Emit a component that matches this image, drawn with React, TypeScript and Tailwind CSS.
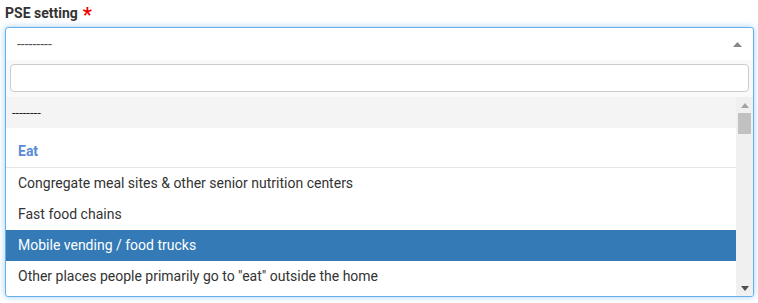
import React from "react";

const options = [
  "Congregate meal sites & other senior nutrition centers",
  "Fast food chains",
  "Mobile vending / food trucks",
  "Other places people primarily go to \"eat\" outside the home",
];

export default function App() {
  return (
    <div className="w-[758px] h-[303px] bg-white px-[5px] pt-[1px] font-['Roboto',sans-serif] text-[#333]">
      <label className="flex items-center h-[24px] text-[14px] font-bold text-[#333]">
        PSE setting <span className="ml-[5px] text-[20px] leading-none text-[#e00] mt-[4px]">*</span>
      </label>
      <div className="mt-[2px] w-[749px] border border-[#66afe9] rounded-[3px] shadow-[0_0_6px_rgba(102,175,233,0.6)] bg-white overflow-hidden">
        {/* selection */}
        <div className="flex items-center h-[32px] pl-[11px] pr-[11px] text-[14px] text-[#555]">
          <span className="flex-1">---------</span>
          <svg width="9" height="5" viewBox="0 0 9 5">
            <path d="M0 5 L4.5 0 L9 5 Z" fill="#888" />
          </svg>
        </div>
        {/* search */}
        <div className="bg-[#f9f9f9] px-[4px] pt-[4px] pb-[5px]">
          <input className="block w-full h-[28px] bg-white border border-[#ccc] rounded-[4px] outline-none" />
        </div>
        {/* results */}
        <div className="flex h-[199px]">
          <div className="flex-1 overflow-hidden text-[14px]">
            <div className="h-[31px] flex items-center pl-[6px] bg-[#f4f4f4] text-[13px] text-[#222]">--------</div>
            <div className="h-[40px] flex items-end pb-[5px] pl-[12px] font-bold text-[#5b8ad6] border-b border-[#e5e5e5]">Eat</div>
            {options.map((o, i) => (
              <div
                key={o}
                className={
                  i === 2
                    ? "h-[31px] flex items-center pl-[12px] bg-[#337ab7] text-white"
                    : "h-[31px] flex items-center pl-[12px] text-[#333]"
                }
              >
                {o}
              </div>
            ))}
          </div>
          {/* scrollbar */}
          <div className="w-[17px] bg-[#f0f0f0] flex flex-col items-center">
            <div className="h-[16px] flex items-center justify-center">
              <svg width="8" height="5" viewBox="0 0 8 5">
                <path d="M0 5 L4 0 L8 5 Z" fill="#a3a3a3" />
              </svg>
            </div>
            <div className="w-[13px] h-[21px] bg-[#c1c1c1]" />
            <div className="flex-1" />
            <div className="h-[16px] flex items-center justify-center">
              <svg width="8" height="5" viewBox="0 0 8 5">
                <path d="M0 0 L8 0 L4 5 Z" fill="#505050" />
              </svg>
            </div>
          </div>
        </div>
      </div>
    </div>
  );
}
